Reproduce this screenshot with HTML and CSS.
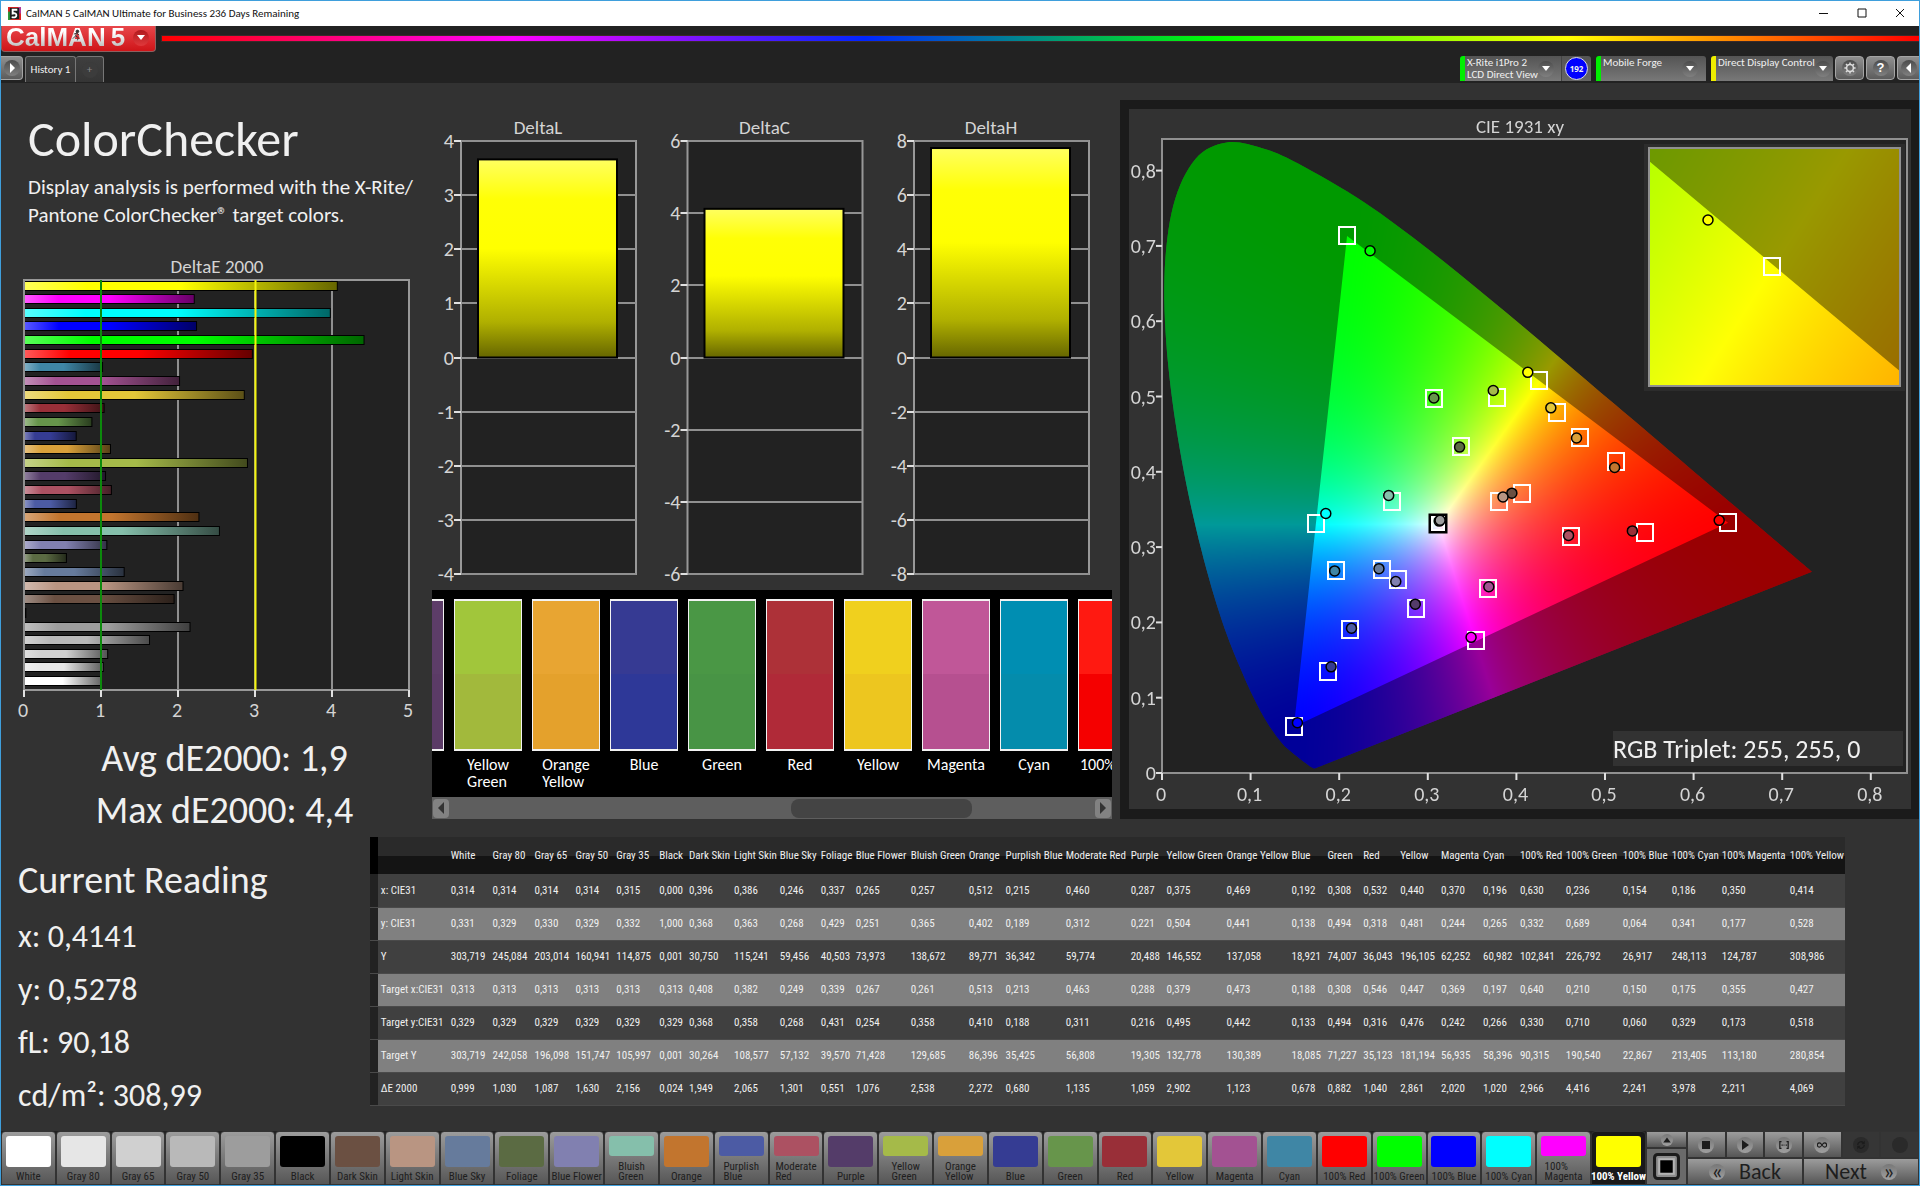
FILE: index.html
```html
<!DOCTYPE html>
<html lang="en">
<head>
<meta charset="utf-8">
<title>CalMAN 5 CalMAN Ultimate for Business 236 Days Remaining</title>
<link rel="stylesheet" href="styles.css">
</head>
<body>
<header class="titlebar">
  <svg class="app-icon" viewBox="0 0 14 14" aria-hidden="true"><rect width="14" height="14" fill="#d22"/><path d="M0 5h3v9H0z" fill="#2b9a3a"/><path d="M11 0h3v7h-3z" fill="#b03a9a"/><rect x="2" y="1" width="10" height="12" fill="#1c1c1c"/><path d="M10 3H5v4q4-1 4 2t-5 2" fill="none" stroke="#fff" stroke-width="2"/></svg>
  <span class="window-title">CalMAN 5 CalMAN Ultimate for Business 236 Days Remaining</span>
  <div class="window-controls">
    <button aria-label="Minimize"><svg viewBox="0 0 10 10"><path d="M0 5.5h9"/></svg></button>
    <button aria-label="Maximize"><svg viewBox="0 0 10 10"><path d="M1 1h8v8H1z"/></svg></button>
    <button aria-label="Close"><svg viewBox="0 0 10 10"><path d="M1 1l8 8M9 1L1 9"/></svg></button>
  </div>
</header>

<div class="brandbar">
  <button class="brand" aria-label="CalMAN 5 menu"><span>CalMAN</span><span>5</span><i class="knob red"><svg viewBox="0 0 10 6"><path d="M1 0h8L5 5z"/></svg></i>
    <svg class="runner" viewBox="0 0 10 12" aria-hidden="true"><circle cx="6" cy="2" r="1.5"/><path d="M5 3L4 7l3 2-1 3M4 7l-3 3M2 5l3-1 3 2"/></svg>
  </button>
  <div class="rainbow"></div>
</div>

<nav class="tabbar">
  <button class="square first" aria-label="Expand"><i class="knob"><svg viewBox="0 0 8 10"><path d="M2 0v10l5-5z"/></svg></i></button>
  <button class="tab">History 1</button>
  <button class="tab add" aria-label="Add history"><i class="knob dim">+</i></button>
  <div class="devices">
    <div class="device-group">
      <button class="device green meter"><span>X-Rite i1Pro 2<br>LCD Direct View</span><i class="knob"><svg viewBox="0 0 10 6"><path d="M1 0h8L5 5z"/></svg></i></button>
      <button class="badge-cell"><b>192</b></button>
    </div>
    <button class="device green source"><span>Mobile Forge</span><i class="knob"><svg viewBox="0 0 10 6"><path d="M1 0h8L5 5z"/></svg></i></button>
    <button class="device yellow display"><span>Direct Display Control</span><i class="knob"><svg viewBox="0 0 10 6"><path d="M1 0h8L5 5z"/></svg></i></button>
    <button class="square" aria-label="Settings"><i class="knob"><svg class="gear" viewBox="0 0 12 12"><circle cx="6" cy="6" r="3.4"/><path class="teeth" d="M6 .4v2M6 9.600v2M.4 6h2M9.600 6h2M2 2l1.500 1.500M8.500 8.500L10 10M2 10l1.500-1.500M8.500 3.500L10 2"/></svg></i></button>
    <button class="square" aria-label="Help"><i class="knob help">?</i></button>
    <button class="square last" aria-label="Collapse"><i class="knob"><svg viewBox="0 0 8 10"><path d="M6 0v10L1 5z"/></svg></i></button>
  </div>
</nav>

<main>
  <div class="charts">
    <section class="summary">
      <h1>ColorChecker</h1>
      <p class="lead">Display analysis is performed with the X-Rite/<br>Pantone ColorChecker® target colors.</p>
      <svg id="delta-e" viewBox="1 0 431 480" role="img" aria-label="DeltaE 2000"></svg>
      <p class="stat">Avg dE2000: 1,9</p>
      <p class="stat">Max dE2000: 4,4</p>
    </section>

    <section class="deltas">
      <svg id="delta-lch" viewBox="0 0 680 475" role="img" aria-label="DeltaL, DeltaC and DeltaH"></svg>
      <div class="strip"><div class="track" id="track"></div></div>
      <div class="scroller">
        <button aria-label="Scroll left"><svg viewBox="0 0 8 14"><path d="M7 1v12L1 7z"/></svg></button>
        <div class="rail"><div class="thumb"></div></div>
        <button aria-label="Scroll right"><svg viewBox="0 0 8 14"><path d="M1 1v12l6-6z"/></svg></button>
      </div>
    </section>

    <section class="cie">
      <canvas id="gamut" width="782" height="700"></canvas>
      <svg id="cie-overlay" viewBox="0 0 782 700" role="img" aria-label="CIE 1931 xy"></svg>
    </section>
  </div>

  <div class="readings">
    <section class="current">
      <h2>Current Reading</h2>
      <p>x: 0,4141</p>
      <p>y: 0,5278</p>
      <p>fL: 90,18</p>
      <p>cd/m²: 308,99</p>
    </section>
    <table class="data" id="data"></table>
  </div>
</main>

<footer class="patchbar">
  <div class="patches" id="patches"></div>
  <div class="pattern">
    <button class="up" aria-label="Show more"><i class="knob"><svg viewBox="0 0 8 6"><path d="M4 1l3 4H1z"/></svg></i></button>
    <button class="window" aria-label="Pattern window"><svg viewBox="0 0 26 26"><rect x="1.500" y="1.500" width="23" height="23" rx="3" fill="#8d8d8d" stroke="#1c1c1c" stroke-width="3"/><rect x="5" y="5" width="16" height="16" fill="#b4b4b4"/><rect x="7" y="7" width="12" height="12" fill="#000"/></svg></button>
  </div>
  <div class="transport">
    <div class="row">
      <button aria-label="Stop"><i class="knob"><svg viewBox="0 0 10 10"><path d="M1 1h8v8H1z"/></svg></i></button>
      <button aria-label="Play"><i class="knob"><svg viewBox="0 0 10 10"><path d="M2 0v10l7-5z"/></svg></i></button>
      <button aria-label="Read series"><i class="knob"><svg viewBox="0 0 12 10"><path class="line" d="M3 1H1v8h2M9 1h2v8H9M3 5h1.500M5.500 5h1M8 5h1.500"/></svg></i></button>
      <button aria-label="Read continuous"><i class="knob"><svg viewBox="0 0 14 8"><path class="line" d="M7 4C5 1 4 1 3.500 1a3 3 0 0 0 0 6C4 7 5 7 7 4s3-3 3.500-3a3 3 0 0 1 0 6C10 7 9 7 7 4z"/></svg></i></button>
      <button class="off" aria-label="Refresh"><i class="knob"><svg viewBox="0 0 12 12"><path class="line" d="M2 6a4 4 0 0 1 7-2.500M10 6a4 4 0 0 1-7 2.500"/><path d="M10.500 1v4h-4zM1.500 11V7h4z"/></svg></i></button>
      <button class="off" aria-label="Record"><i class="knob"></i></button>
    </div>
    <div class="row">
      <button class="nav"><i class="knob">«</i>Back</button>
      <button class="nav">Next<i class="knob">»</i></button>
    </div>
  </div>
</footer>
<script src="app.js"></script>
</body>
</html>
```
FILE: styles.css
```css
* { box-sizing: border-box; }
body {
  margin: 0;
  min-height: 100vh;
  display: flex;
  flex-direction: column;
  border: 1px solid #3f9fdc;
  background: #323232;
  color: #f0f0f0;
  font-family: Carlito, Calibri, "Open Sans", sans-serif;
  overflow-x: hidden;
}
button {
  margin: 0;
  padding: 0;
  border: 0;
  font: inherit;
  color: inherit;
  background: none;
}
h1, h2, p { margin: 0; font-weight: 400; }
svg { display: block; }

/* window title */
.titlebar {
  display: flex;
  align-items: center;
  height: 25px;
  padding-bottom: 1px;
  background: #fff;
  color: #111;
  font-size: 11px;
}
.app-icon { width: 13px; height: 13px; margin: 0 5px 0 7px; }
.window-controls { display: flex; margin-left: auto; }
.window-controls button { width: 38px; display: grid; place-items: center; }
.window-controls svg { width: 10px; height: 10px; fill: none; stroke: #111; }

/* logo and rainbow */
.brandbar {
  display: flex;
  align-items: flex-start;
  gap: 6px;
  height: 30px;
  background: #222;
}
.brand {
  position: relative;
  display: flex;
  align-items: center;
  gap: 5px;
  width: 155px;
  height: 26px;
  padding: 0 0 4px 4px;
  border: 1px solid #8d6060;
  border-top: 0;
  border-radius: 0 0 4px 4px;
  background: linear-gradient(#e8474b, #cf1418);
  font: bold 26px/22px "Liberation Sans", sans-serif;
}
.brand span {
  background: linear-gradient(#fff 30%, #b9b9b9);
  -webkit-background-clip: text;
  background-clip: text;
  color: transparent;
}
.brand .knob { margin: 2px 0 0 3px; }
.runner {
  position: absolute;
  left: 70px;
  top: 3px;
  width: 9px;
  height: 12px;
  fill: #333;
  stroke: #333;
}
.runner path { fill: none; }
.rainbow {
  flex: 1;
  height: 5px;
  margin-top: 10px;
  background: linear-gradient(90deg, #f00, #f0f 20%, #0026ff 40%, #0f0 60%, #ff0 80%, #f00);
  outline: 1px solid #3a2a2a;
}

/* tabs and devices */
.knob {
  flex: none;
  display: grid;
  place-items: center;
  width: 16px;
  height: 16px;
  border-radius: 50%;
  background: linear-gradient(#4c4c4c, #808080);
  font-style: normal;
}
.knob svg { width: 10px; height: 10px; fill: #fff; }
.knob.red { background: linear-gradient(#b01a1d, #e0383b); }
.knob.dim { background: #3c3c3c; color: #888; }
.tabbar {
  display: flex;
  height: 27px;
  padding-bottom: 1px;
  background: #222;
  font-size: 11px;
  line-height: 12px;
}
.square {
  width: 29px;
  height: 24px;
  display: grid;
  place-items: center;
  border: 1px solid #a5a5a5;
  border-radius: 4px;
  background: linear-gradient(#8f8f8f, #5c5c5c);
}
.square.first { width: 22px; border-left: 0; border-radius: 0 4px 4px 0; margin-right: 2px; }
.square.last { width: 22px; border-right: 0; border-radius: 4px 0 0 4px; }
.knob .gear { width: 12px; height: 12px; fill: none; stroke: #ddd; stroke-width: 1.500px; }
.help { font: bold 13px/16px "Liberation Sans", sans-serif; color: #fff; }
.tab {
  width: 51px;
  border: 1px solid #777;
  border-bottom: 0;
  border-radius: 3px 3px 0 0;
  background: linear-gradient(#3f3f3f, #353535);
}
.tab.add { width: 28px; display: grid; place-items: center; border-left: 0; }
.devices { display: flex; gap: 2px; margin-left: auto; white-space: nowrap; }
.device-group { display: flex; margin-right: 3px; }
.device {
  display: flex;
  justify-content: space-between;
  align-items: flex-start;
  height: 25px;
  padding: 1px 8px 0 2px;
  border-left: 5px solid #0e0;
  border-radius: 3px 3px 0 0;
  background: linear-gradient(#545454, #787878);
  text-align: left;
}
.device .knob { margin-top: 4px; }
.device.yellow { border-color: #ee0; }
.meter { width: 101px; border-top-right-radius: 0; }
.source { width: 110px; margin-right: 3px; }
.display { width: 122px; padding-right: 5px; }
.badge-cell {
  width: 30px;
  height: 25px;
  display: grid;
  place-items: center;
  border-left: 1px solid #444;
  border-radius: 0 3px 0 0;
  background: linear-gradient(#545454, #666);
}
.badge-cell b {
  width: 23px;
  height: 23px;
  border: 1px solid #ddd;
  border-radius: 50%;
  background: #00f;
  font: bold 8px/21px "Open Sans", sans-serif;
}

/* charts row */
.charts { display: grid; grid-template-columns: minmax(0, 431fr) minmax(0, 688fr) minmax(0, 799fr); }
.charts text { fill: #d4d4d4; font-size: 20px; }
.charts .title { font-size: 19px; text-anchor: middle; }
.charts .mid { text-anchor: middle; }
.charts .end { text-anchor: end; }
.grid { stroke: #909090; stroke-width: 2; fill: none; }
.tick { stroke: #e0e0e0; stroke-width: 2; }
.plot { fill: #222; stroke: #989898; stroke-width: 2; }
.summary { padding-top: 26px; }
h1 { padding-left: 27px; font-size: 50px; line-height: 60px; }
.lead { padding-left: 27px; margin-top: 4px; font-size: 21px; line-height: 28px; white-space: nowrap; }
.summary svg { width: 100%; margin-top: 23px; }
.stat { padding-left: 16px; text-align: center; font-size: 38px; line-height: 52px; }
.deltas { padding: 32px 8px 0 0; }
.deltas > svg { width: 100%; }
.strip { height: 207px; padding-top: 9px; background: #000; overflow: hidden; }
/* scrolled so that the first card shows only its right edge */
.track { display: flex; margin-left: -61px; }
.card { flex: 0 0 78px; padding: 0 5px; text-align: center; font-size: 16px; line-height: 17px; color: #fff; }
.card svg { width: 68px; height: 152px; margin-bottom: 5px; }
.card span { display: inline-block; text-align: left; white-space: nowrap; }
.scroller { display: flex; align-items: center; height: 22px; padding: 0 1px; background: #5e5e5e; }
.scroller button { width: 16px; height: 19px; display: grid; place-items: center; border-radius: 4px; background: #828282; }
.scroller svg { width: 8px; height: 14px; fill: #333; }
.rail { flex: 1; height: 19px; }
.thumb { width: 28%; height: 19px; margin-left: 53%; border-radius: 8px; background: #444; }
.cie {
  display: grid;
  align-self: start;
  margin-top: 17px;
  border: 9px solid #1b1b1b;
  border-right-width: 8px;
  border-bottom-width: 10px;
  background: #323232;
}
.cie canvas, .cie svg { grid-area: 1 / 1; display: block; width: 100%; }
.charts .triplet { fill: #f0f0f0; font-size: 26px; }

/* readings */
.readings { display: flex; align-items: flex-start; padding-top: 1px; }
.current { flex: none; width: 369px; padding: 17px 0 0 17px; font-size: 32px; }
.current h2 { font-size: 38px; line-height: 52px; margin-bottom: 4px; }
.current p { line-height: 53px; }
.data {
  flex: 1;
  margin-right: 74px;
  table-layout: fixed;
  border-collapse: collapse;
  font: 11px "Roboto Condensed", Carlito, sans-serif;
  white-space: nowrap;
}
.data th, .data td { padding: 0 0 0 3px; text-align: left; font-weight: 400; }
.data thead tr { height: 37px; background: linear-gradient(#2a2a2a 50%, #141414 50%); }
.data tbody tr { height: 33px; background: #404040; border-bottom: 1px solid #4a4a4a; }
.data tbody tr:nth-child(even) { background: #808080; }
.data .handle { background: #222; }
.data thead .handle { background: #000; }

/* patch bar */
.patchbar { display: flex; height: 54px; margin-top: auto; background: #222; }
.patchbar button { border: 1px solid #333; background: linear-gradient(#9c9c9c, #565656); color: #1e1e1e; }
.patches { flex: 1; display: flex; min-width: 0; }
.patches button {
  flex: 1 1 0;
  min-width: 0;
  display: flex;
  flex-direction: column;
  align-items: center;
  justify-content: space-between;
  padding: 4px 3px 2px;
  border-radius: 4px 4px 0 0;
  font: 11px/10px "Roboto Condensed", Carlito, sans-serif;
  white-space: nowrap;
  text-align: left;
}
.patches .chip { width: 45px; height: 31px; border-radius: 3px; }
.patches .short .chip { height: 20px; }
.patches .on { background: #191919; color: #fff; font-weight: 700; }
.pattern { flex: 0 0 41px; display: flex; flex-direction: column; }
.pattern button { display: grid; place-items: center; }
.pattern .up { height: 17px; }
.pattern .window { flex: 1; background: #6a6a6a; }
.pattern .window svg { width: 27px; height: 27px; }
.patchbar .knob { background: linear-gradient(#777, #a0a0a0); }
.patchbar .knob svg { fill: #1c1c1c; }
.patchbar .knob .line { fill: none; stroke: #1c1c1c; stroke-width: 1.500px; }
.pattern .up .knob { width: 12px; height: 12px; }
.transport { flex: 0 0 232px; display: grid; grid-template-rows: 1fr 1fr; }
.row { display: grid; grid-auto-flow: column; grid-auto-columns: 1fr; }
.row button { display: flex; align-items: center; justify-content: center; }
.patchbar .row .off { background: #363636; }
.patchbar .row .off .knob { background: #2a2a2a; }
.row .nav { gap: 14px; font-size: 22px; line-height: 22px; }
.nav .knob { line-height: 16px; }
```
FILE: app.js
```
const $ = id => document.getElementById(id);

/* name, chip colour, x, y, Y, target x, target y, target Y, dE2000, column width */
const patches = [
  ['White', '#ffffff', '0,314', '0,331', '303,719', '0,313', '0,329', '303,719', '0,999', 42],
  ['Gray 80', '#e6e6e6', '0,314', '0,329', '245,084', '0,313', '0,329', '242,058', '1,030', 42],
  ['Gray 65', '#d0d0d0', '0,314', '0,330', '203,014', '0,313', '0,329', '196,098', '1,087', 41],
  ['Gray 50', '#b9b9b9', '0,314', '0,329', '160,941', '0,313', '0,329', '151,747', '1,630', 41],
  ['Gray 35', '#9d9d9d', '0,315', '0,332', '114,875', '0,313', '0,329', '105,997', '2,156', 43],
  ['Black', '#000000', '0,000', '1,000', '0,001', '0,313', '0,329', '0,001', '0,024', 30],
  ['Dark Skin', '#6b5042', '0,396', '0,368', '30,750', '0,408', '0,368', '30,264', '1,949', 45],
  ['Light Skin', '#b99582', '0,386', '0,363', '115,241', '0,382', '0,358', '108,577', '2,065', 44],
  ['Blue Sky', '#667b9c', '0,246', '0,268', '59,456', '0,249', '0,268', '57,132', '1,301', 41],
  ['Foliage', '#5b6b43', '0,337', '0,429', '40,503', '0,339', '0,431', '39,570', '0,551', 35],
  ['Blue Flower', '#8180b0', '0,265', '0,251', '73,973', '0,267', '0,254', '71,428', '1,076', 55],
  ['Bluish Green', '#85bfab', '0,257', '0,365', '138,672', '0,261', '0,358', '129,685', '2,538', 58],
  ['Orange', '#c2752e', '0,512', '0,402', '89,771', '0,513', '0,410', '86,396', '2,272', 37],
  ['Purplish Blue', '#4c5ba4', '0,215', '0,189', '36,342', '0,213', '0,188', '35,425', '0,680', 60],
  ['Moderate Red', '#ac5162', '0,460', '0,312', '59,774', '0,463', '0,311', '56,808', '1,135', 65],
  ['Purple', '#543c69', '0,287', '0,221', '20,488', '0,288', '0,216', '19,305', '1,059', 36],
  ['Yellow Green', '#a5ba49', '0,375', '0,504', '146,552', '0,379', '0,495', '132,778', '2,902', 60],
  ['Orange Yellow', '#d9a03a', '0,469', '0,441', '137,058', '0,473', '0,442', '130,389', '1,123', 65],
  ['Blue', '#353c93', '0,192', '0,138', '18,921', '0,188', '0,133', '18,085', '0,678', 36],
  ['Green', '#67954b', '0,308', '0,494', '74,007', '0,308', '0,494', '71,227', '0,882', 36],
  ['Red', '#992f38', '0,532', '0,318', '36,043', '0,546', '0,316', '35,123', '1,040', 37],
  ['Yellow', '#e3c739', '0,440', '0,481', '196,105', '0,447', '0,476', '181,194', '2,861', 41],
  ['Magenta', '#a35292', '0,370', '0,244', '62,252', '0,369', '0,242', '56,935', '2,020', 42],
  ['Cyan', '#3f86a5', '0,196', '0,265', '60,982', '0,197', '0,266', '58,396', '1,020', 37],
  ['100% Red', '#ff0000', '0,630', '0,332', '102,841', '0,640', '0,330', '90,315', '2,966', 46],
  ['100% Green', '#00ff00', '0,236', '0,689', '226,792', '0,210', '0,710', '190,540', '4,416', 57],
  ['100% Blue', '#0000ff', '0,154', '0,064', '26,917', '0,150', '0,060', '22,867', '2,241', 49],
  ['100% Cyan', '#00ffff', '0,186', '0,341', '248,113', '0,175', '0,329', '213,405', '3,978', 50],
  ['100% Magenta', '#ff00ff', '0,350', '0,177', '124,787', '0,355', '0,173', '113,180', '2,211', 68],
  ['100% Yellow', '#ffff00', '0,414', '0,528', '308,986', '0,427', '0,518', '280,854', '4,069', 58]
];
const num = s => parseFloat(s.replace(',', '.'));
const mix = (hex, to, k) => 'rgb(' + [1, 3, 5].map(i =>
  Math.round(parseInt(hex.substr(i, 2), 16) * (1 - k) + to * k)).join() + ')';
const text = (x, y, s, cls) => `<text x="${x}" y="${y}" class="${cls}">${s}</text>`;
const line = (x1, y1, x2, y2, cls) => `<path d="M${x1} ${y1}L${x2} ${y2}" class="${cls}"/>`;

/* data table */
{
  const labels = ['x: CIE31', 'y: CIE31', 'Y', 'Target x:CIE31', 'Target y:CIE31', 'Target Y', 'ΔE 2000'];
  const total = 78 + patches.reduce((a, p) => a + p[9], 0);
  const col = w => `<col style="width:${w / total * 100}%">`;
  $('data').innerHTML = '<colgroup>' + col(8) + col(70) + patches.map(p => col(p[9])).join('') + '</colgroup>' +
    '<thead><tr><th class="handle"></th><th></th>' + patches.map(p => `<th scope="col">${p[0]}</th>`).join('') + '</tr></thead><tbody>' +
    labels.map((l, i) => `<tr><td class="handle"></td><th scope="row">${l}</th>` +
      patches.map(p => `<td>${p[i + 2]}</td>`).join('') + '</tr>').join('') + '</tbody>';
}

/* patch buttons */
$('patches').innerHTML = patches.map(p => {
  const wrap = ['Bluish Green', 'Purplish Blue', 'Moderate Red', 'Yellow Green', 'Orange Yellow', '100% Magenta'].includes(p[0]);
  const cls = wrap ? 'short' : p[0] === '100% Yellow' ? 'on' : '';
  return `<button class="${cls}"><i class="chip" style="background:${p[1]}"></i><span>${wrap ? p[0].replace(' ', '<br>') : p[0]}</span></button>`;
}).join('');

/* target and measured comparison cards */
$('track').innerHTML = [
  ['Purple', '#5d3d68', '#5b3b66'], ['Yellow<br>Green', '#a1c63b', '#a2b93c'], ['Orange<br>Yellow', '#e8a532', '#e4a12c'],
  ['Blue', '#363a93', '#2e3898'], ['Green', '#4a9745', '#489445'], ['Red', '#ad3138', '#b02a38'],
  ['Yellow', '#f0d01e', '#edc61f'], ['Magenta', '#c05798', '#b65090'], ['Cyan', '#008eb2', '#048cac'],
  ['100% Red', '#ff1911', '#f50000']
].map(c => `<div class="card"><svg viewBox="0 0 68 152"><path d="M0 0h68v152H0z" fill="#f2f2f2"/><path d="M1 2h66v73H1z" fill="${c[1]}"/><path d="M1 75h66v75H1z" fill="${c[2]}"/></svg><span>${c[0]}</span></div>`).join('');

/* DeltaE bars */
{
  let s = text(217, 21, 'DeltaE 2000', 'title') + '<rect x="24" y="28" width="385" height="410" class="plot"/>', defs = '';
  for (let i = 0; i < 6; i++) {
    const x = 24 + i * 77;
    if (i > 1 && i < 5) s += line(x, 28, x, 438, 'grid');
    s += line(x, 438, x, 445, 'tick') + text(x - 1, 465, i, 'mid');
  }
  [...patches].reverse().forEach((p, i) => {
    defs += `<linearGradient id="e${i}"><stop offset="0" stop-color="${mix(p[1], 255, .35)}"/><stop offset=".2" stop-color="${p[1]}"/><stop offset=".5" stop-color="${p[1]}"/><stop offset="1" stop-color="${mix(p[1], 0, .6)}"/></linearGradient>`;
    s += `<rect x="24.500" y="${Math.round(28.500 + i * 13.64) + .5}" width="${num(p[8]) * 77 - .5}" height="9" fill="url(#e${i})" stroke="#000"/>`;
  });
  s += '<path d="M24 28v410" class="grid"/><path d="M101 28v410" stroke="#0c8a0c" stroke-width="2"/><path d="M255.500 28v410" stroke="#f4f40a" stroke-width="2"/>';
  $('delta-e').innerHTML = `<defs>${defs}</defs>` + s;
}

/* DeltaL / DeltaC / DeltaH */
{
  let s = '<defs><linearGradient id="y" x2="0" y2="1"><stop offset="0" stop-color="#ffff60"/><stop offset=".2" stop-color="#ffff06"/><stop offset=".45" stop-color="#ffff00"/><stop offset=".82" stop-color="#b0b000"/><stop offset="1" stop-color="#666600"/></linearGradient></defs>';
  [['DeltaL', 4, 1, 3.66], ['DeltaC', 6, 2, 4.12], ['DeltaH', 8, 2, 7.74]].forEach(([name, max, step, v], k) => {
    const x = 29 + k * 226.500, zero = 242.500, u = 216.500 / max;
    s += text(x + 77, 19, name, 'title') + `<rect x="${x}" y="26" width="175" height="433" class="plot"/>`;
    for (let n = -max; n <= max; n += step) {
      const y = Math.round(zero - n * u);
      s += line(x, y, x + 175, y, 'grid') + line(x - 7, y, x, y, 'tick') + text(x - 7, y + 7, n, 'end');
    }
    s += `<rect x="${x + 17}" y="${zero - v * u}" width="139" height="${v * u}" fill="url(#y)" stroke="#000" stroke-width="2"/>`;
  });
  $('delta-lch').innerHTML = s;
}

/* CIE 1931 chromaticity diagram */
const locus = [.1741,.005,.1726,.0048,.1689,.0069,.1644,.0109,.1566,.0177,.144,.0297,.1355,.0399,.1241,.0578,.1096,.0868,.0913,.1327,.0687,.2007,.0454,.295,.0235,.4127,.0082,.5384,.0039,.6548,.0139,.7502,.0389,.812,.0743,.8338,.1142,.8262,.1547,.8059,.2296,.7543,.3016,.6923,.3731,.6245,.4441,.5547,.5125,.4866,.5752,.4242,.627,.3725,.6658,.334,.6915,.3083,.719,.2809,.7347,.2653];
const primaries = [[.64, .33], [.21, .71], [.15, .06]];
const px = x => 32 + x * 886, py = y => 663 - y * 755;

/* inverse of the primaries matrix, scaled to the D65 white */
const toRGB = (() => {
  const [r, g, b] = primaries.map(([x, y]) => [x / y, 1, (1 - x - y) / y]);
  const cross = (a, c) => [a[1] * c[2] - a[2] * c[1], a[2] * c[0] - a[0] * c[2], a[0] * c[1] - a[1] * c[0]];
  const dot = (a, c) => a[0] * c[0] + a[1] * c[1] + a[2] * c[2];
  const rows = [cross(g, b), cross(b, r), cross(r, g)];
  const w = [.3127 / .329, 1, .3583 / .329];
  const ws = rows.map(q => dot(q, w));
  return (x, y) => {
    const v = [x, y, 1 - x - y];
    const c = rows.map((q, i) => Math.max(0, dot(q, v) / ws[i]));
    const m = Math.max(...c) || 1;
    return c.map(k => 255 * Math.pow(k / m, 1.4));
  };
})();
function field(w, h, fx, fy) {
  const c = document.createElement('canvas');
  c.width = w; c.height = h;
  const g = c.getContext('2d'), im = g.createImageData(w, h);
  for (let j = 0, o = 0; j < h; j++) for (let i = 0; i < w; i++, o += 4) {
    const q = toRGB(fx(i), fy(j));
    im.data[o] = q[0]; im.data[o + 1] = q[1]; im.data[o + 2] = q[2]; im.data[o + 3] = 255;
  }
  g.putImageData(im, 0, 0);
  return c;
}
function shade(g, w, h, X, Y) {
  g.beginPath();
  g.rect(0, 0, w, h);
  primaries.forEach(([x, y], i) => g[i ? 'lineTo' : 'moveTo'](X(x), Y(y)));
  g.closePath();
  g.fillStyle = 'rgba(0,0,0,.4)';
  g.fill('evenodd');
}
{
  const g = $('gamut').getContext('2d');
  g.fillStyle = '#222';
  g.fillRect(33, 30, 745, 633);
  g.save();
  g.beginPath();
  const P = i => { i = Math.max(0, Math.min(locus.length / 2 - 1, i)); return [px(locus[2 * i]), py(locus[2 * i + 1])]; };
  g.moveTo(...P(0));
  for (let i = 0; i < locus.length / 2 - 1; i++) {
    const [a, b, c, d] = [P(i - 1), P(i), P(i + 1), P(i + 2)];
    g.bezierCurveTo(b[0] + (c[0] - a[0]) / 6, b[1] + (c[1] - a[1]) / 6, c[0] - (d[0] - b[0]) / 6, c[1] - (d[1] - b[1]) / 6, c[0], c[1]);
  }
  g.closePath();
  g.clip();
  g.drawImage(field(782, 700, i => (i - 32) / 886, j => (663 - j) / 755), 0, 0);
  shade(g, 782, 700, px, py);
  g.restore();

  /* magnified view round the current patch */
  const X = x => 124 + (x - .427) * 4960, Y = y => 118 - (y - .518) * 4700;
  const z = field(251, 238, i => .427 + (i - 124) / 4960, j => .518 + (118 - j) / 4700);
  shade(z.getContext('2d'), 251, 238, X, Y);
  g.fillStyle = '#2c2c2c';
  g.fillRect(515, 35, 261, 247);
  g.drawImage(z, 520, 39);

  let s = text(391, 24, 'CIE 1931 xy', 'title') + '<rect x="33" y="30" width="745" height="634" class="grid"/>';
  for (let n = 0; n < 9; n++) {
    const l = n ? '0,' + n : '0', x = 33 + n * 88.600, y = 664 - n * 75.300;
    s += line(x, 664, x, 671, 'tick') + text(x - 1, 692, l, 'mid') + line(27, y, 33, y, 'tick') + text(27, y + 7, l, 'end');
  }
  s += '<rect x="520" y="39" width="251" height="238" class="grid"/>';
  patches.slice(6).concat([patches[0]]).forEach(p => {
    const x = Math.round(px(num(p[5]))), y = Math.round(py(num(p[6])));
    const gray = p[0] === 'White';
    if (gray) s += `<rect x="${x - 8}" y="${y - 9}" width="16" height="17" fill="none" stroke="#000" stroke-width="3"/>`;
    s += `<rect x="${gray ? x - 6 : x - 8}" y="${gray ? y - 7 : y - 9}" width="${gray ? 12 : 16}" height="${gray ? 13 : 17}" fill="none" stroke="#fff" stroke-width="2"/>`;
  });
  patches.slice(6).concat([patches[0], patches[4]]).forEach(p => {
    s += `<circle cx="${px(num(p[2]))}" cy="${py(num(p[3])) - 1}" r="5" fill="${p[1]}" stroke="#000" stroke-width="1.500"/>`;
  });
  s += '<rect x="635" y="149" width="16" height="17" fill="none" stroke="#fff" stroke-width="2"/><circle cx="579" cy="111" r="5" fill="#ff0" stroke="#000" stroke-width="1.500"/>';
  s += '<rect x="484" y="622" width="290" height="35" fill="#323232"/>' + text(484, 649, 'RGB Triplet: 255, 255, 0', 'triplet');
  $('cie-overlay').innerHTML = s;
}
```
